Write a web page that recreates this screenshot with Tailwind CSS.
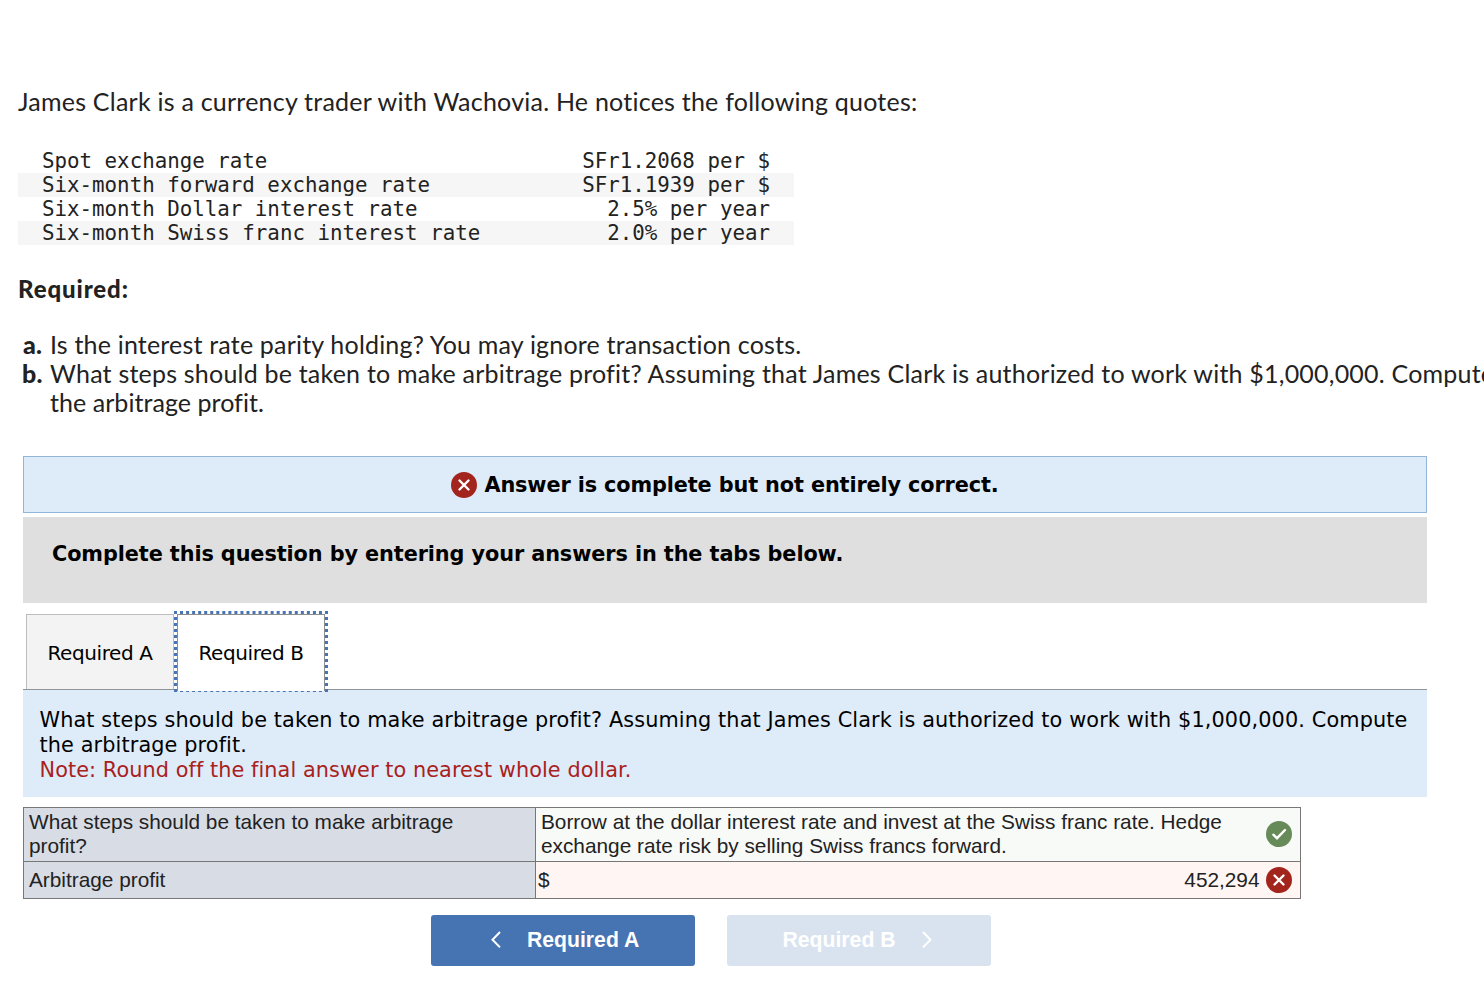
<!DOCTYPE html>
<html lang="en">
<head>
    <meta charset="UTF-8">
    <meta name="viewport" content="width=device-width, initial-scale=1.0">
    <title>Interest rate parity question</title>

    <!-- tailwind cdn -->
    <script src="https://cdn.jsdelivr.net/npm/@tailwindcss/browser@4"></script>
</head>
<body class="bg-white overflow-hidden">

    <div class="w-[1520px] h-[988px] pt-[87px] overflow-hidden">

        <!-- question -->
        <div class="pl-[18px] text-[#222] font-['Lato',sans-serif] text-[25px] leading-[29px] tracking-[0.23px]">
            <p>James Clark is a currency trader with Wachovia. He notices the following quotes:</p>

            <table class="w-[776px] mt-[33px] font-['DejaVu_Sans_Mono',monospace] text-[20.8px] leading-6 tracking-normal whitespace-nowrap">
                <tbody>
                    <tr>
                        <td class="p-0 pl-6">Spot exchange rate</td>
                        <td class="p-0 pr-6 text-right">SFr1.2068 per $</td>
                    </tr>
                    <tr class="bg-[#f6f6f6]">
                        <td class="p-0 pl-6">Six-month forward exchange rate</td>
                        <td class="p-0 pr-6 text-right">SFr1.1939 per $</td>
                    </tr>
                    <tr>
                        <td class="p-0 pl-6">Six-month Dollar interest rate</td>
                        <td class="p-0 pr-6 text-right">2.5% per year</td>
                    </tr>
                    <tr class="bg-[#f6f6f6]">
                        <td class="p-0 pl-6">Six-month Swiss franc interest rate</td>
                        <td class="p-0 pr-6 text-right">2.0% per year</td>
                    </tr>
                </tbody>
            </table>

            <p class="mt-[29px] font-black text-2xl leading-[29px] tracking-[0.9px]">Required:</p>

            <div class="mt-[27px] grid grid-cols-[32px_1fr] whitespace-nowrap">
                <b class="pl-[5px] font-black">a.</b>
                <p class="tracking-[0.19px]">Is the interest rate parity holding? You may ignore transaction costs.</p>
                <b class="pl-1 font-black">b.</b>
                <p class="tracking-[0.21px]">What steps should be taken to make arbitrage profit? Assuming that James Clark is authorized to work with $1,000,000. Compute<br><span class="tracking-[0.05px]">the arbitrage profit.</span></p>
            </div>
        </div>

        <div class="w-[1404px] ml-[23px] mt-[39px] text-black font-['DejaVu_Sans',sans-serif] text-[20.8px]">

            <!-- result banner -->
            <div class="h-[57px] flex justify-center items-center gap-[7px] bg-[#deebf9] border border-[#92b5da] font-bold tracking-[-0.12px]">
                <svg class="w-[26px] h-[26px]" viewBox="0 0 26 26" fill="none">
                    <circle cx="13" cy="13" r="13" fill="#a3241d"/>
                    <path d="M8.500 8.500l9 9M17.500 8.500l-9 9" stroke="#fff" stroke-width="2.4" stroke-linecap="round"/>
                </svg>
                <span class="pt-0.5">Answer is complete but not entirely correct.</span>
            </div>

            <div class="mt-1 h-[86px] pl-[29px] pt-[23px] bg-[#dfdfdf] font-bold leading-7 tracking-[-0.09px]">Complete this question by entering your answers in the tabs below.</div>

            <!-- tabs -->
            <div class="mt-[11px] h-[76px] pl-[3px] flex border-b border-[#8f9499] text-[20px] tracking-[-0.4px]">
                <div class="w-[148px] h-[75px] flex justify-center items-center bg-[#f3f3f3] border border-b-0 border-[#bdbdbd] pt-0.5">Required A</div>
                <div class="relative w-[148px] h-[77px] ml-[3px] flex justify-center items-center bg-white border border-b-0 border-[#8d8d8d]">
                    Required B
                    <svg class="absolute -left-1 -top-1 w-[154px] h-[81px]" viewBox="0 0 154 81" fill="none" stroke="#4874b3" stroke-width="3">
                        <path d="M0 1.5h154" stroke-dasharray="3 3.04"/>
                        <path d="M1.5 0v81M152.500 0v81" stroke-dasharray="3 3"/>
                        <path d="M0 80.500h154" stroke-width="1" stroke-dasharray="3 3.04"/>
                    </svg>
                </div>
            </div>

            <div class="h-[107px] pl-[16.500px] pt-[18px] bg-[#deebf9] leading-[25px] tracking-[0.12px] whitespace-nowrap">
                <p>What steps should be taken to make arbitrage profit? Assuming that James Clark is authorized to work with $1,000,000. Compute<br>the arbitrage profit.</p>
                <p class="text-[#a9211c] tracking-[0.08px]">Note: Round off the final answer to nearest whole dollar.</p>
            </div>

            <!-- answers -->
            <div class="w-[1278px] mt-2.5 grid grid-cols-[511px_764px] grid-rows-[53px_36px] gap-px p-px bg-[#777] text-[#222] font-['Liberation_Sans',Arial,sans-serif] leading-6">
                <div class="pl-[5px] pt-0.5 bg-[#d8dce5]">What steps should be taken to make arbitrage<br>profit?</div>
                <div class="pl-[5px] pr-2 pt-0.5 flex justify-between bg-[#f8faf7]">
                    <p>Borrow at the dollar interest rate and invest at the Swiss franc rate. Hedge<br>exchange rate risk by selling Swiss francs forward.</p>
                    <svg class="w-[26px] h-[26px] mt-[11px]" viewBox="0 0 26 26" fill="none">
                        <circle cx="13" cy="13" r="13" fill="#678b58"/>
                        <path d="M7.300 13.700l3.700 3.500 8-8.200" stroke="#fff" stroke-width="2.4" stroke-linecap="round"/>
                    </svg>
                </div>
                <div class="pl-[5px] pt-1.5 bg-[#d8dce5]">Arbitrage profit</div>
                <div class="pl-0.5 pr-2 flex items-center bg-[#fff5f3]">
                    <span>$</span>
                    <span class="ml-auto mr-[6.500px]">452,294</span>
                    <svg class="w-[26px] h-[26px]" viewBox="0 0 26 26" fill="none">
                        <circle cx="13" cy="13" r="13" fill="#a3241d"/>
                        <path d="M8.500 8.500l9 9M17.500 8.500l-9 9" stroke="#fff" stroke-width="2.4" stroke-linecap="round"/>
                    </svg>
                </div>
            </div>

            <!-- navigation -->
            <div class="mt-4 ml-[408px] flex gap-8 text-white font-['Liberation_Sans',Arial,sans-serif] font-bold text-[21.2px]">
                <button type="button" class="w-[264px] h-[51px] pl-[59px] pb-0.5 flex items-center bg-[#4673b2] rounded-[3px]">
                    <svg class="w-3 h-[18px] mr-[25px]" viewBox="0 0 12 18" fill="none" stroke="#fff" stroke-width="2">
                        <path d="M10 1L2.500 8.700L10 16.400"/>
                    </svg>
                    Required A
                </button>
                <button type="button" class="w-[264px] h-[51px] pl-[55.500px] pb-0.5 flex items-center bg-[#d9e3ef] rounded-[3px]">
                    Required B
                    <svg class="w-3 h-[18px] ml-[25px]" viewBox="0 0 12 18" fill="none" stroke="#fff" stroke-width="2">
                        <path d="M2 1L9.500 8.700L2 16.400"/>
                    </svg>
                </button>
            </div>
        </div>
    </div>

</body>
</html>
